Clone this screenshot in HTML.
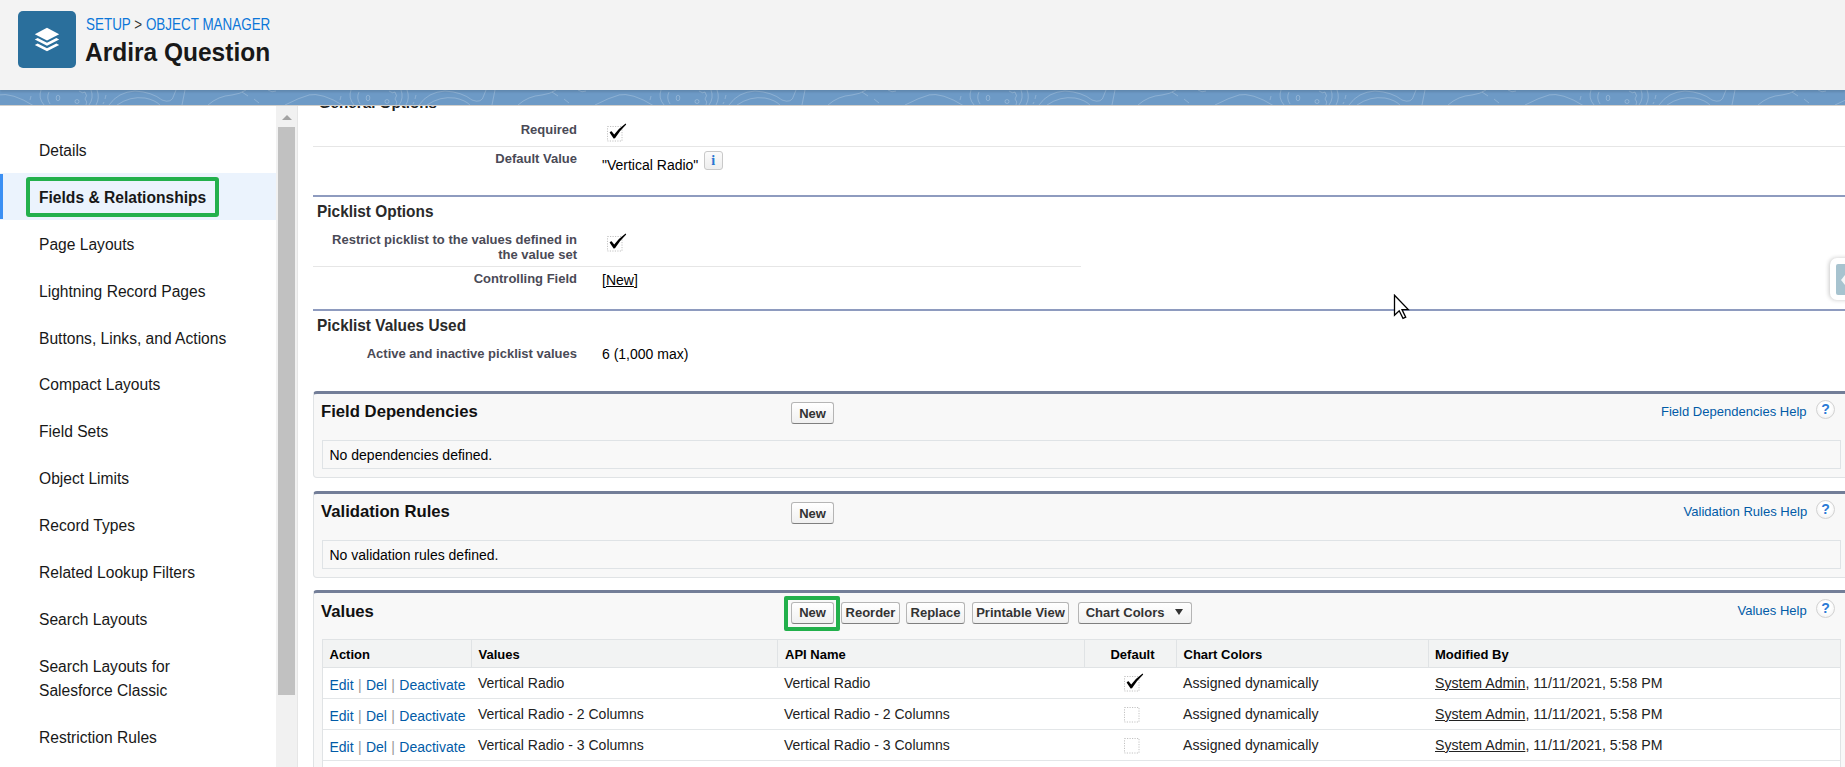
<!DOCTYPE html>
<html><head><meta charset="utf-8">
<style>
*{margin:0;padding:0;box-sizing:border-box}
html,body{width:1845px;height:767px;overflow:hidden;background:#fff;font-family:"Liberation Sans",sans-serif;color:#000}
.abs{position:absolute;white-space:nowrap}
#hdr{position:absolute;left:0;top:0;width:1845px;height:90px;background:#f3f3f3;box-shadow:0 2px 2px rgba(0,0,0,.12);z-index:5}
#band{position:absolute;left:0;top:90px;width:1845px;height:15px;background:#6d9ac6;z-index:4;overflow:hidden}
#icon{position:absolute;left:18px;top:11px;width:58px;height:57px;background:#2a6f9c;border-radius:5px}
.crumb{position:absolute;left:86px;top:16.3px;font-size:16.2px;line-height:16.2px;color:#0b76d9;transform-origin:0 0;transform:scaleX(.83);white-space:nowrap}
.crumb span{color:#333}
.title{position:absolute;left:85px;top:38px;font-size:25px;font-weight:bold;color:#181818;transform-origin:0 0;transform:scaleX(.98);white-space:nowrap}
#side{position:absolute;left:0;top:105px;width:276px;height:662px;background:#fff}
.nav{position:absolute;left:39px;font-size:15.6px;color:#181818;white-space:nowrap}
#sel{position:absolute;left:0;top:173px;width:276px;height:47px;background:#ebf3fd}
#selbar{position:absolute;left:0;top:174px;width:3px;height:45px;background:#3b8ff3}
#selbox{position:absolute;left:26px;top:177px;width:193px;height:40px;border:4px solid #23b04c;border-radius:3px}
#track{position:absolute;left:276px;top:105px;width:22px;height:662px;background:#f1f1f1;border-right:1px solid #e6e6e6}
#thumb{position:absolute;left:278px;top:127px;width:17px;height:568px;background:#c1c1c1}
#arrow{position:absolute;left:282px;top:115px;width:0;height:0;border-left:5px solid transparent;border-right:5px solid transparent;border-bottom:5px solid #a3a3a3}
.lbl{position:absolute;font-size:13px;font-weight:bold;color:#4a4a56;text-align:right;white-space:nowrap}
.val{position:absolute;font-size:14px;color:#000;white-space:nowrap}
.hline{position:absolute;height:1px;background:#e3e3e3}
.sline{position:absolute;height:2px;background:#8296c2}
.sh{position:absolute;font-size:15.4px;font-weight:bold;color:#222;white-space:nowrap}
.blk{position:absolute;left:313px;width:1545px;height:87px;background:#f8f8f8;border:1px solid #e0e3e5;border-top:3px solid #6c7995;border-radius:4px}
.bt{position:absolute;font-size:16.5px;font-weight:bold;color:#000;white-space:nowrap}
.btn{position:absolute;height:22px;border:1px solid #b5b5b5;border-bottom-color:#7f7f7f;border-radius:3px;background:linear-gradient(#fff,#f1f1f1);font-size:12.6px;font-weight:bold;color:#333;text-align:center;line-height:20px;white-space:nowrap}
.help{position:absolute;font-size:13px;color:#015ba7;white-space:nowrap}
.q{position:absolute;width:19px;height:19px;border-radius:50%;border:1px solid #d0d0d0;background:radial-gradient(circle at 50% 35%,#fff,#e9e9e9);color:#1b74d0;font-weight:bold;font-size:14px;text-align:center;line-height:17px}
.inner{position:absolute;left:322px;width:1519px;height:29px;border:1px solid #dfe3e6;background:#f8f8f8}
.msg{position:absolute;font-size:14px;color:#000;white-space:nowrap}
.chk{position:absolute;width:15px;height:15px;border:1px dotted #c8c8c8}
.t{position:absolute;white-space:nowrap}
#content{position:absolute;left:0;top:0;width:1845px;height:767px;overflow:hidden}
</style></head><body>


<div id="content">
<div class="t" style="left:318.8px;top:94.73px;font-size:15.2px;line-height:15.2px;font-weight:bold;color:#222;">General Options</div>
<div class="t" style="right:1268px;top:123.20px;font-size:13px;line-height:13px;font-weight:bold;color:#4a4a56;">Required</div>
<svg style="position:absolute;left:604px;top:120px" width="24" height="24" viewBox="0 0 24 24"><rect x="3.5" y="6.5" width="14.5" height="14.5" fill="none" stroke="#c2c2c2" stroke-width="1" stroke-dasharray="1.2 1.3"/><path d="M5.6 12.6 Q6.8 11.2 7.6 11.2 L10.2 14.6 Q14.5 8.6 21.6 3.6 L22.2 4.5 Q15.6 10.8 11 18.2 L9.6 18.4 Z" fill="#000"/></svg>
<div style="position:absolute;left:313px;top:146px;width:1532px;height:1px;background:#e6e6e6"></div>
<div class="t" style="right:1268px;top:152.30px;font-size:13px;line-height:13px;font-weight:bold;color:#4a4a56;">Default Value</div>
<div class="t" style="left:602px;top:158.15px;font-size:14px;line-height:14px;font-weight:normal;color:#000;">&quot;Vertical Radio&quot;</div>
<div style="position:absolute;left:704px;top:151px;width:19px;height:19px;border:1px solid #c9c9c9;border-radius:3px;background:linear-gradient(#fbfbfb,#eeeeee);"></div>
<div class="t" style="left:711.3px;top:154.35px;font-size:14px;line-height:14px;font-weight:bold;color:#2a76d2;font-family:'Liberation Serif',serif;">i</div>
<div style="position:absolute;left:313px;top:195px;width:1532px;height:2px;background:#8e9bbf"></div>
<div class="t" style="left:317px;top:203.64px;font-size:15.9px;line-height:15.9px;font-weight:bold;color:#2a2a2a;transform:scaleX(.97);transform-origin:0 0">Picklist Options</div>
<div class="t" style="right:1268px;top:232.80px;font-size:13px;line-height:13px;font-weight:bold;color:#4a4a56;">Restrict picklist to the values defined in</div>
<div class="t" style="right:1268px;top:247.60px;font-size:13px;line-height:13px;font-weight:bold;color:#4a4a56;">the value set</div>
<svg style="position:absolute;left:604px;top:230px" width="24" height="24" viewBox="0 0 24 24"><rect x="3.5" y="6.5" width="14.5" height="14.5" fill="none" stroke="#c2c2c2" stroke-width="1" stroke-dasharray="1.2 1.3"/><path d="M5.6 12.6 Q6.8 11.2 7.6 11.2 L10.2 14.6 Q14.5 8.6 21.6 3.6 L22.2 4.5 Q15.6 10.8 11 18.2 L9.6 18.4 Z" fill="#000"/></svg>
<div style="position:absolute;left:313px;top:266px;width:768px;height:1px;background:#e6e6e6"></div>
<div class="t" style="right:1268px;top:272.10px;font-size:13px;line-height:13px;font-weight:bold;color:#4a4a56;">Controlling Field</div>
<div class="t" style="left:602px;top:272.55px;font-size:14px;line-height:14px;font-weight:normal;color:#000;">[<u>New</u>]</div>
<div style="position:absolute;left:313px;top:309px;width:1532px;height:2px;background:#8e9bbf"></div>
<div class="t" style="left:317px;top:317.54px;font-size:15.9px;line-height:15.9px;font-weight:bold;color:#2a2a2a;transform:scaleX(.97);transform-origin:0 0">Picklist Values Used</div>
<div class="t" style="right:1268px;top:347.10px;font-size:13px;line-height:13px;font-weight:bold;color:#4a4a56;">Active and inactive picklist values</div>
<div class="t" style="left:602px;top:347.15px;font-size:14px;line-height:14px;font-weight:normal;color:#000;">6 (1,000 max)</div>
<div style="position:absolute;left:313px;top:391px;width:1560px;height:87px;background:#f8f8f8;border:1px solid #e0e3e5;border-top:3px solid #737e98;border-radius:4px"></div>
<div class="t" style="left:321px;top:403.56px;font-size:16.7px;line-height:16.7px;font-weight:bold;color:#111;">Field Dependencies</div>
<div class="t" style="right:38px;top:404.84px;font-size:13.3px;line-height:13.3px;font-weight:normal;color:#015ba7;transform:scaleX(.98);transform-origin:100% 0">Field Dependencies Help</div>
<div style="position:absolute;left:1816px;top:400px;width:19px;height:19px;border-radius:50%;border:1px solid #d2d2d2;background:radial-gradient(circle at 50% 40%,#fff 40%,#ececec);"></div>
<div class="t" style="left:1821.3px;top:402.25px;font-size:14px;line-height:14px;font-weight:bold;color:#2b7bd6;">?</div>
<div style="position:absolute;left:322px;top:440px;width:1519px;height:29px;border:1px solid #dfe3e6;background:#f8f8f8"></div>
<div class="t" style="left:329.5px;top:447.85px;font-size:14px;line-height:14px;font-weight:normal;color:#000;">No dependencies defined.</div>
<div style="position:absolute;left:791px;top:402px;width:43px;height:22px;border:1px solid #b5b5b5;border-bottom-color:#7f7f7f;border-radius:3px;background:linear-gradient(#ffffff,#f0f0f0)"></div>
<div class="t" style="left:512.5px;width:600px;text-align:center;top:406.90px;font-size:13px;line-height:13px;font-weight:bold;color:#333;">New</div>
<div style="position:absolute;left:313px;top:491px;width:1560px;height:87px;background:#f8f8f8;border:1px solid #e0e3e5;border-top:3px solid #737e98;border-radius:4px"></div>
<div class="t" style="left:321px;top:503.56px;font-size:16.7px;line-height:16.7px;font-weight:bold;color:#111;">Validation Rules</div>
<div class="t" style="right:38px;top:504.84px;font-size:13.3px;line-height:13.3px;font-weight:normal;color:#015ba7;transform:scaleX(.98);transform-origin:100% 0">Validation Rules Help</div>
<div style="position:absolute;left:1816px;top:500px;width:19px;height:19px;border-radius:50%;border:1px solid #d2d2d2;background:radial-gradient(circle at 50% 40%,#fff 40%,#ececec);"></div>
<div class="t" style="left:1821.3px;top:502.25px;font-size:14px;line-height:14px;font-weight:bold;color:#2b7bd6;">?</div>
<div style="position:absolute;left:322px;top:540px;width:1519px;height:29px;border:1px solid #dfe3e6;background:#f8f8f8"></div>
<div class="t" style="left:329.5px;top:547.85px;font-size:14px;line-height:14px;font-weight:normal;color:#000;">No validation rules defined.</div>
<div style="position:absolute;left:791px;top:502px;width:43px;height:22px;border:1px solid #b5b5b5;border-bottom-color:#7f7f7f;border-radius:3px;background:linear-gradient(#ffffff,#f0f0f0)"></div>
<div class="t" style="left:512.5px;width:600px;text-align:center;top:506.90px;font-size:13px;line-height:13px;font-weight:bold;color:#333;">New</div>
<div style="position:absolute;left:313px;top:590px;width:1560px;height:300px;background:#f8f8f8;border:1px solid #e0e3e5;border-top:3px solid #737e98;border-radius:4px"></div>
<div class="t" style="left:321px;top:603.56px;font-size:16.7px;line-height:16.7px;font-weight:bold;color:#111;">Values</div>
<div class="t" style="right:38px;top:604.34px;font-size:13.3px;line-height:13.3px;font-weight:normal;color:#015ba7;transform:scaleX(.98);transform-origin:100% 0">Values Help</div>
<div style="position:absolute;left:1816px;top:599px;width:19px;height:19px;border-radius:50%;border:1px solid #d2d2d2;background:radial-gradient(circle at 50% 40%,#fff 40%,#ececec);"></div>
<div class="t" style="left:1821.3px;top:601.25px;font-size:14px;line-height:14px;font-weight:bold;color:#2b7bd6;">?</div>
<div style="position:absolute;left:791px;top:602px;width:43px;height:22px;border:1px solid #b5b5b5;border-bottom-color:#7f7f7f;border-radius:3px;background:linear-gradient(#ffffff,#f0f0f0)"></div>
<div class="t" style="left:512.5px;width:600px;text-align:center;top:606.00px;font-size:13px;line-height:13px;font-weight:bold;color:#333;">New</div>
<div style="position:absolute;left:841px;top:602px;width:59px;height:22px;border:1px solid #b5b5b5;border-bottom-color:#7f7f7f;border-radius:3px;background:linear-gradient(#ffffff,#f0f0f0)"></div>
<div class="t" style="left:570.5px;width:600px;text-align:center;top:606.00px;font-size:13px;line-height:13px;font-weight:bold;color:#333;">Reorder</div>
<div style="position:absolute;left:906px;top:602px;width:59px;height:22px;border:1px solid #b5b5b5;border-bottom-color:#7f7f7f;border-radius:3px;background:linear-gradient(#ffffff,#f0f0f0)"></div>
<div class="t" style="left:635.5px;width:600px;text-align:center;top:606.00px;font-size:13px;line-height:13px;font-weight:bold;color:#333;">Replace</div>
<div style="position:absolute;left:972px;top:602px;width:97px;height:22px;border:1px solid #b5b5b5;border-bottom-color:#7f7f7f;border-radius:3px;background:linear-gradient(#ffffff,#f0f0f0)"></div>
<div class="t" style="left:720.5px;width:600px;text-align:center;top:606.00px;font-size:13px;line-height:13px;font-weight:bold;color:#333;">Printable View</div>
<div style="position:absolute;left:1078px;top:602px;width:114px;height:22px;border:1px solid #b5b5b5;border-bottom-color:#7f7f7f;border-radius:3px;background:linear-gradient(#ffffff,#f0f0f0)"></div>
<div class="t" style="left:1085.7px;top:606.00px;font-size:13px;line-height:13px;font-weight:bold;color:#333;">Chart Colors</div>
<div style="position:absolute;left:1175px;top:609px;width:0;height:0;border-left:4px solid transparent;border-right:4px solid transparent;border-top:6.5px solid #333"></div>
<div style="position:absolute;left:784px;top:596px;width:56px;height:35px;border:4px solid #22b04b;border-radius:2px"></div>
<div style="position:absolute;left:322px;top:639px;width:1519px;height:128px;background:#fff;border:1px solid #e0e3e5;border-bottom:none"></div>
<div style="position:absolute;left:323px;top:640px;width:1517px;height:28px;background:#f2f3f3;border-bottom:1px solid #e0e3e5"></div>
<div style="position:absolute;left:471px;top:640px;width:1px;height:27px;background:#e0e3e5"></div>
<div style="position:absolute;left:777px;top:640px;width:1px;height:27px;background:#e0e3e5"></div>
<div style="position:absolute;left:1084px;top:640px;width:1px;height:27px;background:#e0e3e5"></div>
<div style="position:absolute;left:1176px;top:640px;width:1px;height:27px;background:#e0e3e5"></div>
<div style="position:absolute;left:1428px;top:640px;width:1px;height:27px;background:#e0e3e5"></div>
<div class="t" style="left:329.5px;top:647.90px;font-size:13px;line-height:13px;font-weight:bold;color:#000;">Action</div>
<div class="t" style="left:478.5px;top:647.90px;font-size:13px;line-height:13px;font-weight:bold;color:#000;">Values</div>
<div class="t" style="left:785px;top:647.90px;font-size:13px;line-height:13px;font-weight:bold;color:#000;">API Name</div>
<div class="t" style="left:832.5px;width:600px;text-align:center;top:647.90px;font-size:13px;line-height:13px;font-weight:bold;color:#000;">Default</div>
<div class="t" style="left:1183.5px;top:647.90px;font-size:13px;line-height:13px;font-weight:bold;color:#000;">Chart Colors</div>
<div class="t" style="left:1435px;top:647.90px;font-size:13px;line-height:13px;font-weight:bold;color:#000;">Modified By</div>
<div style="position:absolute;left:323px;top:698px;width:1517px;height:1px;background:#e3e6e8"></div>
<div class="t" style="left:329.5px;top:678.15px;font-size:14px;line-height:14px;font-weight:normal;color:#000;word-spacing:0.45px"><span style="color:#015ba7">Edit</span> <span style="color:#999">|</span> <span style="color:#015ba7">Del</span> <span style="color:#999">|</span> <span style="color:#015ba7">Deactivate</span></div>
<div class="t" style="left:478px;top:675.85px;font-size:14px;line-height:14px;font-weight:normal;color:#222;">Vertical Radio</div>
<div class="t" style="left:784px;top:675.85px;font-size:14px;line-height:14px;font-weight:normal;color:#222;">Vertical Radio</div>
<svg style="position:absolute;left:1121px;top:670px" width="24" height="24" viewBox="0 0 24 24"><rect x="3.5" y="6.5" width="14.5" height="14.5" fill="none" stroke="#c2c2c2" stroke-width="1" stroke-dasharray="1.2 1.3"/><path d="M5.6 12.6 Q6.8 11.2 7.6 11.2 L10.2 14.6 Q14.5 8.6 21.6 3.6 L22.2 4.5 Q15.6 10.8 11 18.2 L9.6 18.4 Z" fill="#000"/></svg>
<div class="t" style="left:1183px;top:675.76px;font-size:14.1px;line-height:14.1px;font-weight:normal;color:#222;">Assigned dynamically</div>
<div class="t" style="left:1435px;top:675.72px;font-size:14.15px;line-height:14.15px;font-weight:normal;color:#222;"><u>System Admin</u>, 11/11/2021, 5:58 PM</div>
<div style="position:absolute;left:323px;top:729px;width:1517px;height:1px;background:#e3e6e8"></div>
<div class="t" style="left:329.5px;top:709.15px;font-size:14px;line-height:14px;font-weight:normal;color:#000;word-spacing:0.45px"><span style="color:#015ba7">Edit</span> <span style="color:#999">|</span> <span style="color:#015ba7">Del</span> <span style="color:#999">|</span> <span style="color:#015ba7">Deactivate</span></div>
<div class="t" style="left:478px;top:706.85px;font-size:14px;line-height:14px;font-weight:normal;color:#222;">Vertical Radio - 2 Columns</div>
<div class="t" style="left:784px;top:706.85px;font-size:14px;line-height:14px;font-weight:normal;color:#222;">Vertical Radio - 2 Columns</div>
<svg style="position:absolute;left:1121px;top:701px" width="24" height="24" viewBox="0 0 24 24"><rect x="3.5" y="6.5" width="14.5" height="14.5" fill="none" stroke="#c2c2c2" stroke-width="1" stroke-dasharray="1.2 1.3"/></svg>
<div class="t" style="left:1183px;top:706.76px;font-size:14.1px;line-height:14.1px;font-weight:normal;color:#222;">Assigned dynamically</div>
<div class="t" style="left:1435px;top:706.72px;font-size:14.15px;line-height:14.15px;font-weight:normal;color:#222;"><u>System Admin</u>, 11/11/2021, 5:58 PM</div>
<div style="position:absolute;left:323px;top:760px;width:1517px;height:1px;background:#e3e6e8"></div>
<div class="t" style="left:329.5px;top:740.15px;font-size:14px;line-height:14px;font-weight:normal;color:#000;word-spacing:0.45px"><span style="color:#015ba7">Edit</span> <span style="color:#999">|</span> <span style="color:#015ba7">Del</span> <span style="color:#999">|</span> <span style="color:#015ba7">Deactivate</span></div>
<div class="t" style="left:478px;top:737.85px;font-size:14px;line-height:14px;font-weight:normal;color:#222;">Vertical Radio - 3 Columns</div>
<div class="t" style="left:784px;top:737.85px;font-size:14px;line-height:14px;font-weight:normal;color:#222;">Vertical Radio - 3 Columns</div>
<svg style="position:absolute;left:1121px;top:732px" width="24" height="24" viewBox="0 0 24 24"><rect x="3.5" y="6.5" width="14.5" height="14.5" fill="none" stroke="#c2c2c2" stroke-width="1" stroke-dasharray="1.2 1.3"/></svg>
<div class="t" style="left:1183px;top:737.76px;font-size:14.1px;line-height:14.1px;font-weight:normal;color:#222;">Assigned dynamically</div>
<div class="t" style="left:1435px;top:737.72px;font-size:14.15px;line-height:14.15px;font-weight:normal;color:#222;"><u>System Admin</u>, 11/11/2021, 5:58 PM</div>
<div style="position:absolute;left:1830px;top:258px;width:30px;height:42px;background:#fff;border-radius:7px;box-shadow:-1px 0 4px rgba(0,0,0,.22)"></div>
<div style="position:absolute;left:1836px;top:264px;width:20px;height:31px;background:#a7c3cf;border-radius:2px"></div>
<svg style="position:absolute;left:1838px;top:272px" width="7" height="16"><path d="M3 8 L7 3 L7 13 Z" fill="#f4f6f7"/></svg>
<svg style="position:absolute;left:1393px;top:294px" width="18" height="27" viewBox="0 0 18 27"><path d="M1.5 1.2 L1.5 21.3 L6.2 16.8 L10 24.3 L12.7 23.1 L9 15.6 L15.3 15.6 Z" fill="#fff" stroke="#000" stroke-width="1.3" stroke-linejoin="miter"/></svg>
</div>
<div id="hdr">
  <div id="icon"><svg width="58" height="57" viewBox="0 0 58 57" style="position:absolute;left:0;top:0">
<path d="M29 16.8 L41.2 23.2 L29 29.6 L16.8 23.2 Z" fill="#fff"/>
<path d="M16.8 28.4 L29 34.8 L41.2 28.4 L38.34 26.9 L29 31.8 L19.66 26.9 Z" fill="#fff"/>
<path d="M16.8 33.9 L29 40.3 L41.2 33.9 L38.34 32.4 L29 37.3 L19.66 32.4 Z" fill="#fff"/>
</svg></div>
<div style="position:absolute;left:0;top:105px;width:1845px;height:1px;background:#d2d0cc;z-index:4"></div>
  <div class="crumb">SETUP <span>&gt;</span> OBJECT MANAGER</div>
  <div class="title">Ardira Question</div>
</div>
<div id="band"><svg width="1845" height="15" style="position:absolute;left:0;top:0">
<defs><pattern id="pt" x="0" y="0" width="310" height="15" patternUnits="userSpaceOnUse">
<g fill="none" stroke="#ffffff" stroke-opacity=".22" stroke-width="1">
<path d="M-2 5 Q12 2 34 16"/>
<path d="M31 6 L30 10"/>
<path d="M41 0 Q38 8 44 15"/><path d="M49 2 Q46 8 50 14"/>
<ellipse cx="58" cy="8" rx="1.8" ry="2.8"/>
<circle cx="77" cy="11.5" r="2"/>
<path d="M79 1 Q83 4 85 2 Q88 6 85 9 Q88 12 86 15"/>
<path d="M91 0 Q94 8 89 15"/>
<path d="M97 0 Q100 8 96 15"/>
<path d="M106 5 L105 9"/><path d="M104 12 L103 14"/>
<path d="M109 15 Q118 2 135 1 Q152 2 162 10 Q172 14 174 5 L176 0"/>
<path d="M117 15 Q130 6 145 8 Q155 10 160 15"/>
<path d="M185 0 L182 15"/>
<path d="M208 15 Q218 6 232 5 Q240 4 246 0"/>
<path d="M242 2 L248 6"/><path d="M254 9 L259 13"/>
<path d="M268 0 Q272 3 276 1"/>
<path d="M285 15 Q298 8 312 4"/>
</g></pattern></defs>
<rect width="1845" height="15" fill="url(#pt)"/>
</svg></div>

<div id="side"></div>
<div id="sel"></div><div id="selbar"></div>
<div class="nav" style="top:142.3px">Details</div>
<div class="nav" style="top:189.3px;font-weight:bold">Fields &amp; Relationships</div>
<div id="selbox"></div>
<div class="nav" style="top:236.3px">Page Layouts</div>
<div class="nav" style="top:283.3px">Lightning Record Pages</div>
<div class="nav" style="top:330.3px">Buttons, Links, and Actions</div>
<div class="nav" style="top:376.3px">Compact Layouts</div>
<div class="nav" style="top:423.3px">Field Sets</div>
<div class="nav" style="top:470.3px">Object Limits</div>
<div class="nav" style="top:517.3px">Record Types</div>
<div class="nav" style="top:564.3px">Related Lookup Filters</div>
<div class="nav" style="top:611.3px">Search Layouts</div>
<div class="nav" style="top:658.3px">Search Layouts for</div>
<div class="nav" style="top:682.3px">Salesforce Classic</div>
<div class="nav" style="top:729.3px">Restriction Rules</div>

<div id="track"></div><div id="thumb"></div><div id="arrow"></div>



</body></html>
